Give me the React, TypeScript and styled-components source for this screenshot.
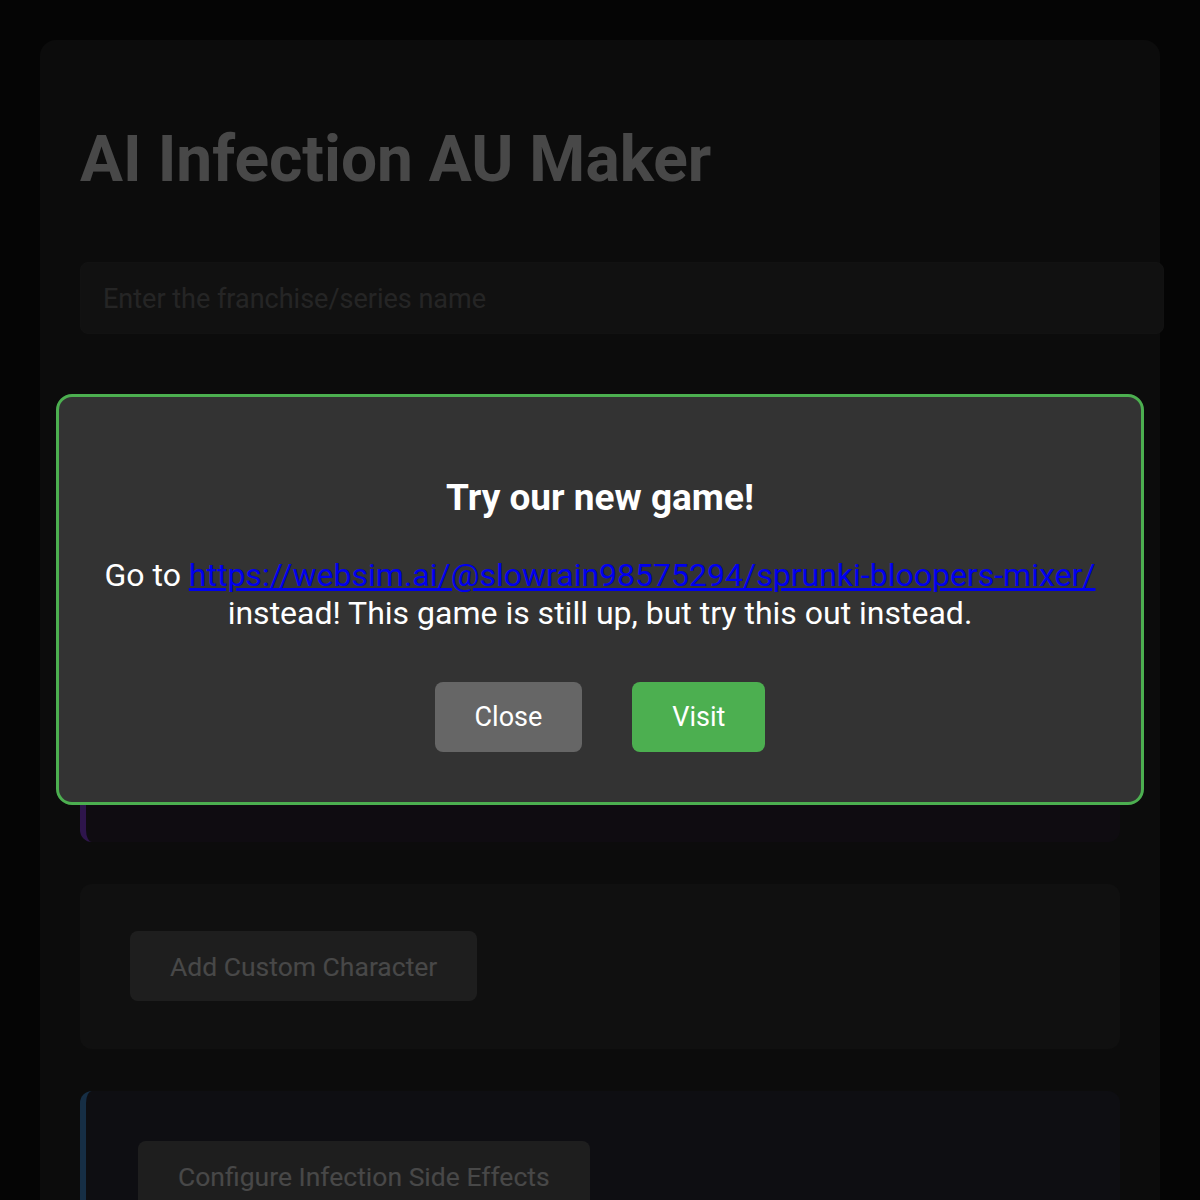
import React from "react";
import styled, { createGlobalStyle } from "styled-components";

const Global = createGlobalStyle`
  * { box-sizing: border-box; }
  html, body { margin: 0; padding: 0; background: #121212; }
  body {
    font-family: Roboto, "Liberation Sans", Arial, sans-serif;
    color: #ffffff;
    padding: 40px;
    min-height: 1200px;
    overflow: hidden;
  }
`;

const Container = styled.div`
  background: #282828;
  border-radius: 16px;
  padding: 40px;
  min-height: 1300px;
`;

const Title = styled.h1`
  margin: 44px 0 66px;
  font-size: 64px;
  font-weight: 700;
  line-height: 72px;
  color: #f2f2f2;
`;

const Input = styled.input`
  display: block;
  width: calc(100% + 44px);
  height: 72px;
  padding: 2px 22px 0;
  font-family: inherit;
  font-size: 27px;
  color: #fff;
  background: #3a3a3a;
  border: 1px solid #3e3e3e;
  border-radius: 8px;
  outline: none;
  margin-bottom: 64px;
  &::placeholder { color: #7e7e7e; }
`;

const Section = styled.section<{ $accent?: string; $tint?: string; $pad?: string }>`
  background: ${(p) => p.$tint || "#363636"};
  border-radius: 12px;
  ${(p) => (p.$accent ? `border-left: 6px solid ${p.$accent};` : "")}
  padding: ${(p) => p.$pad || "47px 50px 48px"};
  margin-bottom: 42px;
`;

const SectionButton = styled.button`
  font-family: inherit;
  font-size: 26.5px;
  color: #f0f0f0;
  background: #666;
  border: none;
  border-radius: 8px;
  padding: 0 40px;
  height: 70px;
`;

const Spacer = styled.div<{ $h: number }>`
  height: ${(p) => p.$h}px;
`;

const Overlay = styled.div`
  position: fixed;
  inset: 0;
  background: rgba(0, 0, 0, 0.7);
`;

const Modal = styled.div`
  position: fixed;
  left: 56px;
  top: 394px;
  width: 1088px;
  background: #333;
  border: 3px solid #4caf50;
  border-radius: 16px;
  padding: 40px;
  text-align: center;
`;

const ModalTitle = styled.h2`
  margin: 39px 0 37px;
  font-size: 37px;
  line-height: 43px;
  font-weight: 700;
  color: #fff;
`;

const ModalText = styled.p`
  margin: 0;
  font-size: 32px;
  line-height: 38px;
  color: #fff;
`;

const Link = styled.a`
  color: #0000ee;
  text-decoration: underline;
`;

const Buttons = styled.div`
  display: flex;
  justify-content: center;
  gap: 50px;
  margin-top: 50px;
  margin-bottom: 10px;
`;

const ModalButton = styled.button<{ $primary?: boolean }>`
  font-family: inherit;
  font-size: 27px;
  color: #fff;
  background: ${(p) => (p.$primary ? "#4caf50" : "#666")};
  border: none;
  border-radius: 8px;
  height: 70px;
  padding: 0 40px;
`;

export default function App() {
  return (
    <>
      <Global />
      <Container>
        <Title>AI Infection AU Maker</Title>
        <Input placeholder="Enter the franchise/series name" />
        <Section $accent="#9a48ff" $tint="#33283a">
          <Spacer $h={349} />
        </Section>
        <Section>
          <SectionButton>Add Custom Character</SectionButton>
        </Section>
        <Section $accent="#4a9ae6" $tint="#2f2f3d" $pad="50px 52px">
          <SectionButton>Configure Infection Side Effects</SectionButton>
        </Section>
      </Container>
      <Overlay />
      <Modal>
        <ModalTitle>Try our new game!</ModalTitle>
        <ModalText>
          Go to{" "}
          <Link href="#">https://websim.ai/@slowrain98575294/sprunki-bloopers-mixer/</Link>{" "}
          instead! This game is still up, but try this out instead.
        </ModalText>
        <Buttons>
          <ModalButton>Close</ModalButton>
          <ModalButton $primary>Visit</ModalButton>
        </Buttons>
      </Modal>
    </>
  );
}
